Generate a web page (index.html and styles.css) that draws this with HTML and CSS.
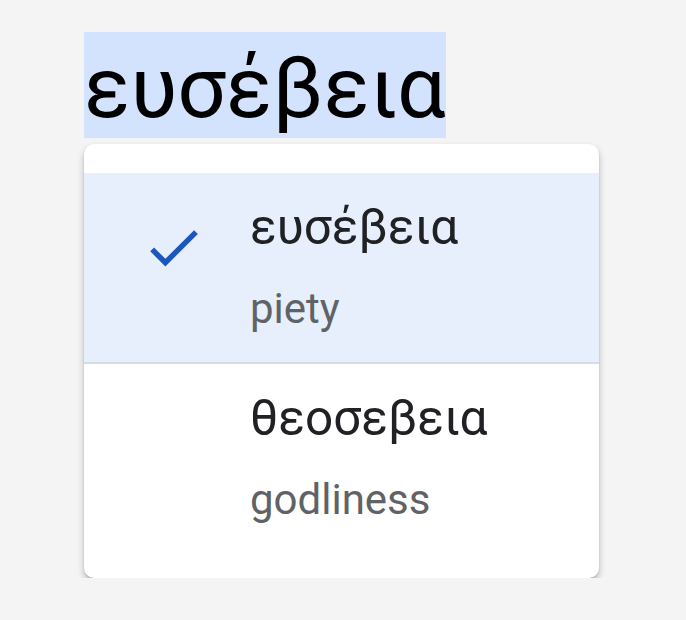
FILE: index.html
```html
<!DOCTYPE html>
<html lang="el">
<head>
<meta charset="utf-8">
<link rel="stylesheet" href="styles.css">
</head>
<body>
<main class="page">
  <div class="word"><span class="word-text">ευσέβεια</span></div>
  <div class="menu">
    <div class="item selected">
      <span class="check">
        <svg viewBox="0 0 24 24" width="65" height="65"><path d="M9 16.17 4.83 12l-1.42 1.41L9 19 21 7l-1.41-1.41z" fill="#1b57bd"/></svg>
      </span>
      <div class="texts">
        <div class="primary">ευσέβεια</div>
        <div class="secondary">piety</div>
      </div>
    </div>
    <div class="item">
      <span class="check"></span>
      <div class="texts">
        <div class="primary">θεοσεβεια</div>
        <div class="secondary">godliness</div>
      </div>
    </div>
  </div>
</main>
</body>
</html>
```
FILE: styles.css
```css
html, body {
  margin: 0;
  padding: 0;
  background: #f4f4f4;
}
.page {
  padding: 32px 0 0 84px;
  font-family: Roboto, "Noto Sans", sans-serif;
}
.word {
  display: flex;
}
.word-text {
  font-size: 86px;
  line-height: 100px;
  padding-top: 6px;
  color: #000;
  background: #d3e3fd;
}
.menu {
  margin-top: 6px;
  width: 515px;
  background: #fff;
  border-radius: 10px;
  box-shadow: 0 4px 7px rgba(0, 0, 0, 0.24), 0 1px 2px rgba(0, 0, 0, 0.12);
  padding: 29px 0 28px;
}
.item {
  display: flex;
  align-items: flex-start;
  padding-left: 57px;
  height: 186px;
  box-sizing: border-box;
}
.item.selected {
  background: #e8effc;
  border-bottom: 2px solid #d6dbe4;
  height: 191px;
}
.check {
  width: 65px;
  height: 65px;
  flex: none;
  margin-top: 42px;
  display: block;
}
.check svg {
  display: block;
}
.texts {
  margin-left: 44px;
  padding-top: 24px;
}
.primary {
  font-size: 49.5px;
  line-height: 60px;
  color: #202124;
}
.secondary {
  margin-top: 27px;
  font-size: 42px;
  line-height: 50px;
  color: #5f6368;
}
```
